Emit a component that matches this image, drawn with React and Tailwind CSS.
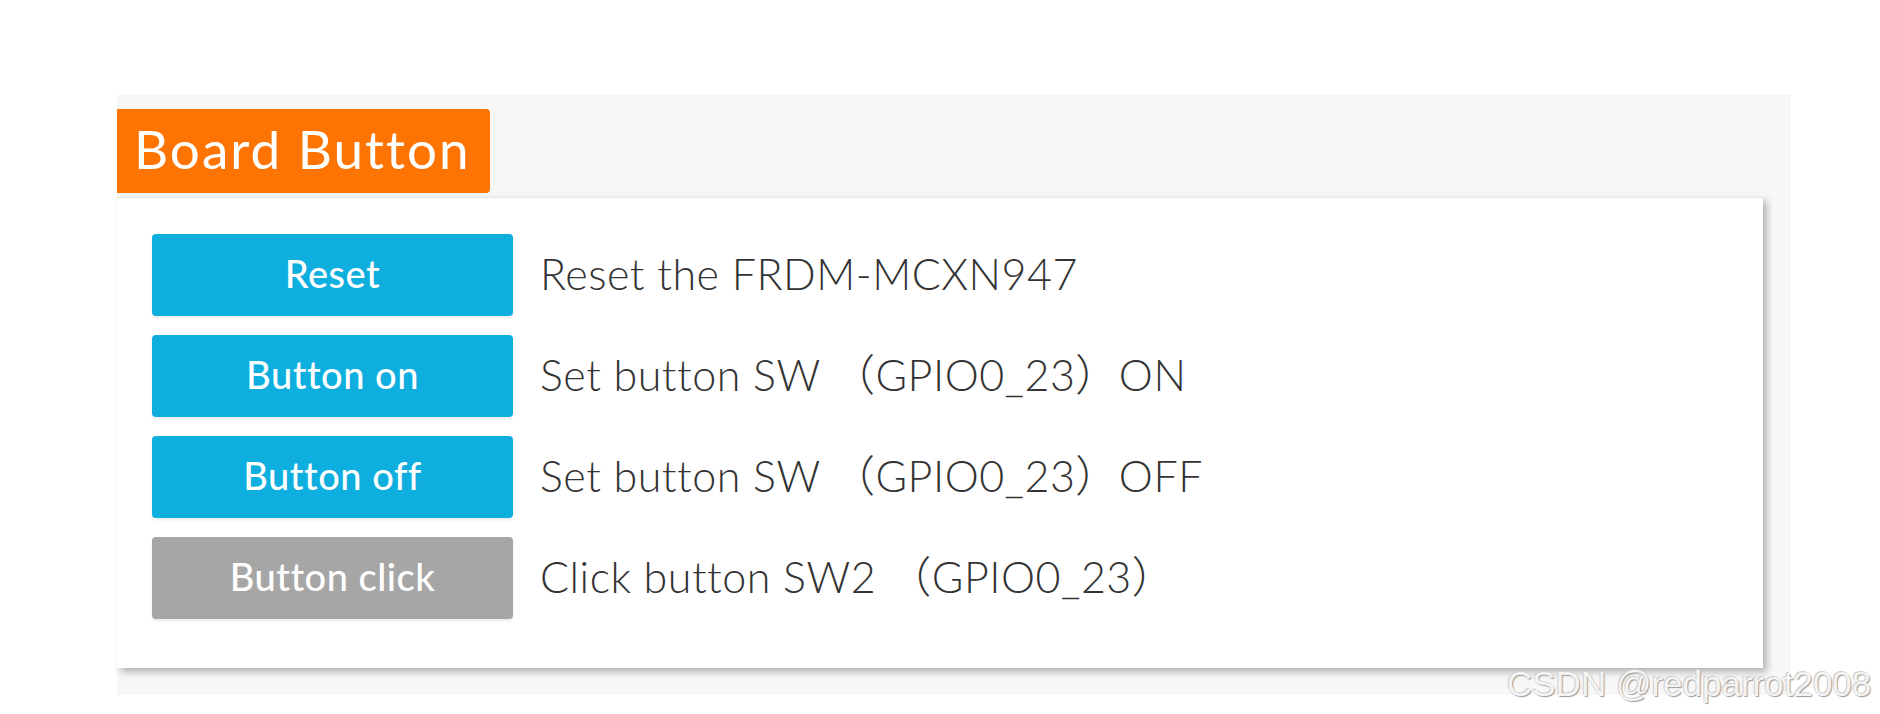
import React from "react";

const rows = [
  { label: "Reset", text: "Reset the FRDM-MCXN947", color: "bg-[#0eaedf]" },
  { label: "Button on", text: "Set button SW （GPIO0_23）ON", color: "bg-[#0eaedf]" },
  { label: "Button off", text: "Set button SW （GPIO0_23）OFF", color: "bg-[#0eaedf]" },
  { label: "Button click", text: "Click button SW2 （GPIO0_23）", color: "bg-[#a6a6a6]" },
];

export default function App() {
  return (
    <div className="relative w-[1880px] h-[714px] bg-white pt-[95px] pl-[117px] overflow-hidden font-['Lato','Noto_Sans_CJK_SC',sans-serif]">
      <div className="w-[1674px] h-[600px] bg-[#f7f7f7] pt-[14px]">
        {/* Title tab */}
        <div className="w-[373px] h-[84px] bg-[#fe7403] rounded-r-[4px] flex items-center pl-[17px] pb-[5px] text-white text-[53px] leading-none tracking-[2px]">
          Board Button
        </div>

        {/* Card */}
        <div className="mt-[4px] w-[1646px] h-[471px] bg-white border-t border-[#e6e6e6] shadow-[4px_4px_7px_rgba(0,0,0,0.28)] pt-[36px] pl-[35px] flex flex-col gap-[19px]">
          {rows.map((r) => (
            <div key={r.label} className="flex items-center">
              <button
                className={`${r.color} w-[361px] h-[82px] pb-[5px] rounded-[4px] shadow-[0_2px_3px_rgba(0,0,0,0.08)] text-white text-[38px] font-medium leading-none tracking-[0.5px]`}
              >
                {r.label}
              </button>
              <span className="ml-[27px] pb-[4px] text-[43px] font-light text-[#333333] leading-none whitespace-pre tracking-[0.5px]">
                {r.text}
              </span>
            </div>
          ))}
        </div>
      </div>

      {/* Watermark */}
      <div className="absolute left-[1507px] top-[666px] whitespace-nowrap text-[35px] leading-none text-[#f4f4f4] font-['Liberation_Sans',sans-serif] [text-shadow:1px_1px_1px_#9a9a9a,-1px_-1px_0_#cfcfcf]">
        CSDN @redparrot2008
      </div>
    </div>
  );
}
